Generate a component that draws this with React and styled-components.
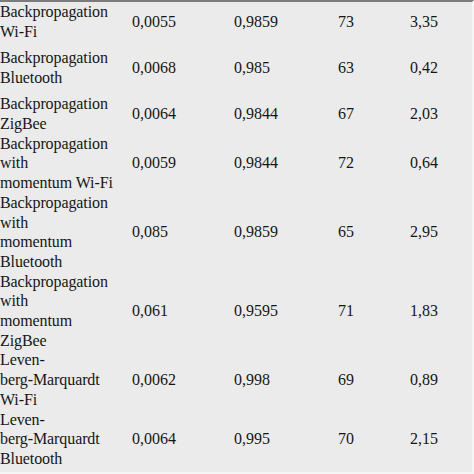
import React from "react";
import styled, { createGlobalStyle } from "styled-components";

const Global = createGlobalStyle`
  html, body { margin: 0; padding: 0; background: #ebebeb; }
`;

const Frame = styled.div`
  width: 474px;
  height: 474px;
  box-sizing: border-box;
  background: #ebebeb;
  border-top: 2px solid #7b7b7b;
  border-right: 2px solid #f5f5f5;
  border-bottom: 2px solid #f5f5f5;
  overflow: hidden;
  color: #161616;
  font-family: "Liberation Serif", "DejaVu Serif", serif;
  font-size: 16px;
  line-height: 19.7px;
`;

const Row = styled.div`
  display: grid;
  grid-template-columns: 132px 102px 104px 72px 1fr;
  align-items: center;
  padding-bottom: ${(p) => p.$pad || 0}px;
`;

const NameCell = styled.div`
  white-space: nowrap;
  letter-spacing: -0.1px;
`;

const NumCell = styled.div`
  white-space: nowrap;
`;

const rows = [
  { name: ["Backpropagation", "Wi-Fi"], v: ["0,0055", "0,9859", "73", "3,35"], pad: 7 },
  { name: ["Backpropagation", "Bluetooth"], v: ["0,0068", "0,985", "63", "0,42"], pad: 6.5 },
  { name: ["Backpropagation", "ZigBee"], v: ["0,0064", "0,9844", "67", "2,03"], pad: 0 },
  { name: ["Backpropagation", "with", "momentum Wi-Fi"], v: ["0,0059", "0,9844", "72", "0,64"] },
  { name: ["Backpropagation", "with", "momentum", "Bluetooth"], v: ["0,085", "0,9859", "65", "2,95"] },
  { name: ["Backpropagation", "with", "momentum", "ZigBee"], v: ["0,061", "0,9595", "71", "1,83"] },
  { name: ["Leven-", "berg-Marquardt", "Wi-Fi"], v: ["0,0062", "0,998", "69", "0,89"] },
  { name: ["Leven-", "berg-Marquardt", "Bluetooth"], v: ["0,0064", "0,995", "70", "2,15"] },
];

export default function App() {
  return (
    <>
      <Global />
      <Frame>
        {rows.map((r, i) => (
          <Row key={i} $pad={r.pad}>
            <NameCell>
              {r.name.map((l, j) => (
                <React.Fragment key={j}>
                  {j > 0 && <br />}
                  {l}
                </React.Fragment>
              ))}
            </NameCell>
            {r.v.map((v, j) => (
              <NumCell key={j}>{v}</NumCell>
            ))}
          </Row>
        ))}
      </Frame>
    </>
  );
}
